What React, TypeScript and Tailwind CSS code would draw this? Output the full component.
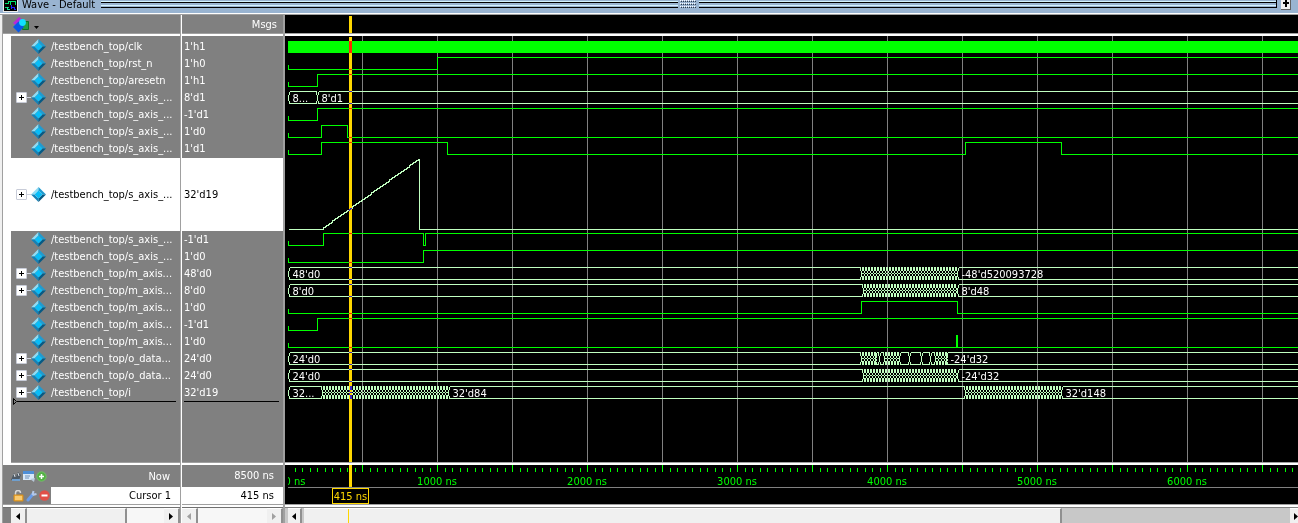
import React from "react";

type Signal = { name: string; value: string; bus?: boolean; tall?: boolean };

const signals: Signal[] = [
  { name: "/testbench_top/clk", value: "1'h1" },
  { name: "/testbench_top/rst_n", value: "1'h0" },
  { name: "/testbench_top/aresetn", value: "1'h1" },
  { name: "/testbench_top/s_axis_...", value: "8'd1", bus: true },
  { name: "/testbench_top/s_axis_...", value: "-1'd1" },
  { name: "/testbench_top/s_axis_...", value: "1'd0" },
  { name: "/testbench_top/s_axis_...", value: "1'd1" },
  { name: "/testbench_top/s_axis_...", value: "32'd19", bus: true, tall: true },
  { name: "/testbench_top/s_axis_...", value: "-1'd1" },
  { name: "/testbench_top/s_axis_...", value: "1'd0" },
  { name: "/testbench_top/m_axis...", value: "48'd0", bus: true },
  { name: "/testbench_top/m_axis...", value: "8'd0", bus: true },
  { name: "/testbench_top/m_axis...", value: "1'd0" },
  { name: "/testbench_top/m_axis...", value: "-1'd1" },
  { name: "/testbench_top/m_axis...", value: "1'd0" },
  { name: "/testbench_top/o_data...", value: "24'd0", bus: true },
  { name: "/testbench_top/o_data...", value: "24'd0", bus: true },
  { name: "/testbench_top/i", value: "32'd19", bus: true },
];

const FAR = 3000;
const BUS = "#c0ffc0";
const GRID = Array.from({ length: 40 }, (_, i) => (i + 1) * 75);

function Diamond() {
  return (
    <svg className="block shrink-0" width="15" height="15" viewBox="0 0 15 15">
      <path d="M7.5 0 0 7.5h3.5l4-4z" fill="#8fdcf5" />
      <path d="M7.5 0 15 7.5h-3.5l-4-4z" fill="#1f9bd0" />
      <path d="M0 7.5 7.5 15v-3.5l-4-4z" fill="#1482b8" />
      <path d="M15 7.5 7.5 15v-3.5l4-4z" fill="#075a84" />
      <path d="M7.5 3.5l4 4-4 4-4-4z" fill="#08bdf8" />
    </svg>
  );
}

function Expander() {
  return (
    <button
      aria-label="Expand signal"
      className="flex h-[11px] w-[11px] shrink-0 items-center justify-center rounded-[1px] border border-[#c8ccd8] bg-white"
    >
      <svg width="5" height="5" viewBox="0 0 5 5" shapeRendering="crispEdges">
        <path d="M2 0h1v5H2zM0 2h5v1H0z" fill="#000" />
      </svg>
    </button>
  );
}

function Digital({ y, points }: { y: number; points: [number, number][] }) {
  const level = (v: number) => (v ? y + 1 : y + 13);
  let d = `M1 ${level(0) - 5}V${level(0)}`;
  points.forEach(([x, v]) => {
    d += `H${x}V${level(v)}`;
  });
  return <path d={d + `H${FAR}`} fill="none" stroke="#00ff00" />;
}

function Bus({ y, from, to, label, open }: { y: number; from: number; to: number; label?: string; open?: boolean }) {
  const t = y + 1;
  const right = open ? `H${to}M${to} ${t + 12}` : `H${to - 1}V${t + 3}M${to} ${t + 3}V${t + 9}M${to - 1} ${t + 9}V${t + 12}`;
  return (
    <>
      <path
        d={`M${from + 1} ${t}${right}H${from + 1}V${t + 9}M${from} ${t + 9}V${t + 3}M${from + 1} ${t + 3}V${t}`}
        fill="none"
        stroke={BUS}
      />
      {label && (
        <text x={from + 4} y={y + 11} fill="#fff">
          {label}
        </text>
      )}
    </>
  );
}

function Hatch({ y, from, to }: { y: number; from: number; to: number }) {
  let d = "";
  for (let x = from; x < to; x += 3) {
    d += `M${x} ${y + 1}h2v4h-2zM${x + 2} ${y + 5}h1v2h-1zM${x} ${y + 7}h2v1h-2zM${x + 2} ${y + 8}h1v2h-1zM${x} ${y + 10}h2v4h-2z`;
  }
  return <path d={d} fill={BUS} />;
}

function Waves() {
  const r = (i: number) => 3 + 17 * i + (i > 7 ? 57 : 0);
  let ramp = "M1 193H36";
  for (let i = 1; i <= 64; i++) {
    ramp += `V${Math.round(192 - (i * 69) / 64)}H${Math.round(36 + i * 1.5)}`;
  }
  return (
    <svg className="absolute inset-0 h-full w-full" shapeRendering="crispEdges" fontSize="11">
      <rect width="100%" height="100%" fill="#000" />
      <svg x="3" y="0" width="100%" height="100%" overflow="hidden">
        <g transform="translate(-1 0)">
          {GRID.map((x) => (
            <rect key={x} x={x} y="0" width="1" height="100%" fill="#808080" />
          ))}
          <rect x="1" y={r(0) + 2} width={FAR} height="12" fill="#00ff00" />
          <g transform="translate(.5 .5)">
            <Digital y={r(1)} points={[[150, 1]]} />
            <Digital y={r(2)} points={[[30, 1]]} />
            <Digital y={r(4)} points={[[30, 1]]} />
            <Digital y={r(5)} points={[[34, 1], [60, 0]]} />
            <Digital y={r(6)} points={[[34, 1], [160, 0], [678, 1], [774, 0]]} />
            <path d={`${ramp}V193H${FAR}`} fill="none" stroke={BUS} />
            <Digital y={r(8)} points={[[36, 1], [136, 0], [138, 1]]} />
            <Digital y={r(9)} points={[[136, 1]]} />
            <Digital y={r(12)} points={[[574, 1], [670, 0]]} />
            <Digital y={r(13)} points={[[30, 1]]} />
            <Digital y={r(14)} points={[[669, 1], [670, 0]]} />
            <Bus y={r(3)} from={1} to={30} label="8..." />
            <Bus y={r(3)} from={30} to={FAR} label="8'd1" open />
            <Bus y={r(10)} from={1} to={574} label="48'd0" />
            <Bus y={r(10)} from={670} to={FAR} label="-48'd520093728" open />
            <Bus y={r(11)} from={1} to={576} label="8'd0" />
            <Bus y={r(11)} from={670} to={FAR} label="8'd48" open />
            <Bus y={r(15)} from={1} to={574} label="24'd0" />
            <Bus y={r(15)} from={588} to={592} />
            <Bus y={r(15)} from={592} to={597} />
            <Bus y={r(15)} from={612} to={622} />
            <Bus y={r(15)} from={622} to={634} />
            <Bus y={r(15)} from={634} to={643} />
            <Bus y={r(15)} from={643} to={648} />
            <Bus y={r(15)} from={659} to={FAR} label="-24'd32" open />
            <Bus y={r(16)} from={1} to={576} label="24'd0" />
            <Bus y={r(16)} from={670} to={FAR} label="-24'd32" open />
            <Bus y={r(17)} from={1} to={35} label="32..." />
            <Bus y={r(17)} from={161} to={678} label="32'd84" />
            <Bus y={r(17)} from={774} to={FAR} label="32'd148" open />
          </g>
          <Hatch y={r(10)} from={575} to={670} />
          <Hatch y={r(11)} from={577} to={670} />
          <Hatch y={r(15)} from={575} to={588} />
          <Hatch y={r(15)} from={598} to={612} />
          <Hatch y={r(15)} from={649} to={659} />
          <Hatch y={r(16)} from={577} to={670} />
          <Hatch y={r(17)} from={36} to={161} />
          <Hatch y={r(17)} from={679} to={774} />
          <rect x="62" y="1" width="3" height="100%" fill="#ffd700" className="mix-blend-difference" />
        </g>
      </svg>
    </svg>
  );
}

function Timeline() {
  const ticks = Array.from({ length: 400 }, (_, i) => i + 1);
  return (
    <svg className="block h-[39px] w-full" shapeRendering="crispEdges" fontSize="11">
      <rect width="100%" height="100%" fill="#000" />
      <svg x="3" y="0" width="100%" height="39" overflow="hidden">
        <g transform="translate(-1 0)">
          {ticks.map((i) => (
            <rect key={i} x={Math.round(i * 7.5 + 0.2)} y={i % 10 ? 3 : 0} width="1" height={i % 10 ? 4 : 7} fill="#00ff00" />
          ))}
          {[0, 1, 2, 3, 4, 5, 6].map((i) => (
            <text key={i} x={i ? i * 150 : 8} y="20" textAnchor="middle" fill="#00ff00">
              {i * 1000} ns
            </text>
          ))}
          <rect x="0" y="22" width={FAR} height="1" fill="#808080" />
          <rect x="62" y="0" width="3" height="22" fill="#ffd700" />
          <rect x="45.5" y="23.5" width="36" height="15" fill="#000" stroke="#ffd700" />
          <text x="63.5" y="35" textAnchor="middle" fill="#ffd700">
            415 ns
          </text>
        </g>
      </svg>
    </svg>
  );
}

function ArrowButton({ dir, off, wide }: { dir: "left" | "right"; off?: boolean; wide?: boolean }) {
  return (
    <button
      aria-label={dir === "left" ? "Scroll left" : "Scroll right"}
      disabled={off}
      className={`flex h-full shrink-0 items-center justify-center border-t border-r-2 border-t-white border-r-[#909090] bg-[#f0f0f0] ${wide ? "w-[14px]" : "w-4"}`}
    >
      <svg width="4" height="7" viewBox="0 0 4 7">
        <path d={dir === "left" ? "M4 0v7L0 3.5z" : "M0 0v7l4-3.5z"} fill={off ? "#a0a0a0" : "#000"} />
      </svg>
    </button>
  );
}

function Rails({ end }: { end?: boolean }) {
  return (
    <div className={`flex h-2 flex-1 flex-col ${end ? "border-r border-black" : ""}`}>
      <div className="h-px bg-[#99b4d1]" />
      <div className="h-px bg-[#d4f4ff]" />
      <div className="h-px bg-black" />
      <div className="h-[2px] bg-[#99b4d1]" />
      <div className="h-px bg-[#d4f4ff]" />
      <div className="h-px bg-[#99b4d1]" />
      <div className="h-px bg-black" />
    </div>
  );
}

const trough = "bg-[#f7f7f7]";
const ridge = "border-b-2 border-white shadow-[inset_0_-1px_#a0a0a0]";

export default function App() {
  return (
    <div className="flex min-h-screen flex-col overflow-hidden bg-[#f0f0f0] font-['DejaVu_Sans_Condensed','Noto_Sans',sans-serif] text-[11px] leading-[17px] text-white">
      <header className="flex h-[15px] items-start overflow-hidden border-b border-[#a0a0a0] bg-[#99b4d1] text-black shadow-[inset_0_-1px_#ffffff]">
        <svg className="ml-[3px] block shrink-0" width="15" height="12" viewBox="0 0 15 12" shapeRendering="crispEdges">
          <path d="M0 0h15v12H0z" fill="#000" />
          <path d="M0 0h1v12H0zM14 0h1v12h-1zM0 11h15v1H0z" fill="#e8e8e8" />
          <path d="M2 3.5h3V1.5h2v3M2 7.5h4M8 1.5h4v3h1" fill="none" stroke="#00e070" />
          <path d="M8 5v4M8 7.5h3v1.500h2" fill="none" stroke="#2020ff" />
          <path d="M4 7v2h3" fill="none" stroke="#20e0a0" />
        </svg>
        <h1 className="-mt-[3px] ml-[4px] shrink-0 text-[11px] leading-[15px] whitespace-nowrap">Wave - Default</h1>
        <div className="mr-1 ml-[6px] flex h-[9px] flex-1 items-start">
          <Rails />
          <svg className="mx-[2px] block shrink-0" width="17" height="8" viewBox="0 0 17 8" shapeRendering="crispEdges">
            {[0, 1, 2, 3, 4, 5, 6, 7].map((i) => (
              <g key={i}>
                <path d={`M${i * 2} 0h1v1h-1zM${i * 2} 3h1v1h-1zM${i * 2} 6h1v1h-1z`} fill="#fff" />
                <path d={`M${i * 2 + 1} 1h1v1h-1zM${i * 2 + 1} 4h1v1h-1zM${i * 2 + 1} 7h1v1h-1z`} fill="#303a48" />
              </g>
            ))}
          </svg>
          <Rails end />
        </div>
        <button aria-label="Dock or undock" className="mr-[7px] flex h-[10px] w-[10px] shrink-0 items-start justify-center border-r border-b border-[#606060] bg-[#f0f0f0]">
          <svg width="7" height="7" viewBox="0 0 7 7" shapeRendering="crispEdges">
            <path d="M3 0h2v7H3zM1 2h6v2H1z" fill="#000" />
          </svg>
        </button>
      </header>

      <main className="flex min-w-0 flex-1 pl-[2px]">
        <section aria-label="Signals" className="flex w-[179px] shrink-0 flex-col border-r border-l border-[#a0a0a0] bg-[#808080]">
          <div className={`flex h-[21px] items-center pl-[10px] ${ridge}`}>
            <button aria-label="Signal options" className="flex items-end gap-1">
              <svg width="17" height="16" viewBox="0 0 17 16">
                <path d="M0 6 6 0l4 3-6 6z" fill="#b828d8" />
                <path d="M9.5 4.5h6v8h-6z" fill="#22a040" stroke="#127028" />
                <path d="M5.5 4.500l5.500 5.500-5.500 5.500L0 10z" fill="#0858e8" />
                <circle cx="9.5" cy="5.500" r="3.400" fill="#10e0ff" />
              </svg>
              <svg className="mb-1" width="5" height="3" viewBox="0 0 5 3">
                <path d="M0 0h5L2.500 3z" fill="#000" />
              </svg>
            </button>
          </div>
          <div className={`flex flex-1 border-l-8 border-l-white ${ridge}`}>
            <ul className="w-full pt-[3px]">
              {signals.map((s, i) => (
                <li
                  key={i}
                  className={`flex items-center ${s.tall ? "mb-px h-[73px] bg-white text-black" : "h-[17px] pb-[2px]"}`}
                >
                  <span className="flex w-5 items-center justify-end">
                    {s.bus && (
                      <>
                        <Expander />
                        <span className="h-px w-[4px] bg-[#d0d4e0]" />
                      </>
                    )}
                  </span>
                  <Diamond />
                  <span className="-mt-px ml-[5px] whitespace-nowrap">{s.name}</span>
                </li>
              ))}
              <li aria-hidden="true" className="-mt-1 flex items-center pr-1 pl-[2px]">
                <svg width="4" height="7" viewBox="0 0 4 7">
                  <path d="M.5.5v6l3-3z" fill="none" stroke="#000" />
                </svg>
                <span className="h-px flex-1 bg-black" />
              </li>
            </ul>
          </div>
          <div className={`h-[42px] ${ridge}`}>
            <div className="flex h-[22px] items-center justify-between pr-[10px] pl-[8px]">
              <span className="flex items-center gap-px">
                <svg width="11" height="11" viewBox="0 0 11 11">
                  <path d="M0 9 3 2l2 4 2-5 3 3-2 5z" fill="#4e5a66" />
                  <path d="M1 8h8v2H1z" fill="#6f9fce" />
                  <path d="M3 3l1 3M7 2l1 3" stroke="#d8dde2" />
                </svg>
                <svg width="12" height="11" viewBox="0 0 12 11">
                  <path d="M0 1h11v8H0z" fill="#d9e8f8" />
                  <path d="M0 0h11v3H0z" fill="#4f8fd8" />
                  <path d="M2 5h5M2 7h4" stroke="#7090b8" />
                  <path d="M7 8l4 3 1-4z" fill="#b8c8d8" />
                </svg>
                <svg width="11" height="11" viewBox="0 0 11 11">
                  <circle cx="5.5" cy="5.5" r="5" fill="#52b043" />
                  <circle cx="5.5" cy="5.5" r="4.7" fill="none" stroke="#8cc884" strokeWidth=".6" />
                  <path d="M5.5 3v5M3 5.5h5" stroke="#fff" strokeWidth="1.5" />
                </svg>
              </span>
              <span>Now</span>
            </div>
            <div className="flex h-[17px]">
              <span className="flex w-[48px] shrink-0 items-center gap-[2px] pl-[10px]">
                <svg className="shrink-0" width="11" height="12" viewBox="0 0 11 12">
                  <path d="M2.5 6V3a2.5 2.5 0 015 0" fill="none" stroke="#d8d8d8" strokeWidth="1.5" />
                  <path d="M1 5h9v6H1z" fill="#f4b440" stroke="#d08a1c" />
                  <path d="M2 7h7M2 9h7" stroke="#ffe0a0" />
                </svg>
                <svg className="shrink-0" width="11" height="12" viewBox="0 0 11 12">
                  <path d="M2 10l5-6" stroke="#6a9ce8" strokeWidth="3" strokeLinecap="round" />
                  <path d="M6.500 5l1-4M6.500 5l4-1" stroke="#b4c8e8" strokeWidth="2" />
                </svg>
                <svg className="shrink-0" width="11" height="11" viewBox="0 0 11 11">
                  <circle cx="5.5" cy="5.5" r="5.200" fill="#e05048" />
                  <path d="M2.500 5.5h6" stroke="#fff" strokeWidth="2" />
                </svg>
              </span>
              <span className="flex-1 bg-white pr-[9px] text-right text-black">Cursor 1</span>
            </div>
          </div>
          <div className="flex h-4 border-t border-[#707070] pl-2">
            <ArrowButton dir="left" />
            <div className={`flex flex-1 ${trough}`}>
              <div className="h-full w-[100px] border-t border-r-2 border-t-white border-r-[#909090] bg-[#f0f0f0]" />
            </div>
            <ArrowButton dir="right" />
          </div>
        </section>

        <section aria-label="Values" className="flex w-[104px] shrink-0 flex-col border-r-2 border-l border-r-[#a0a0a0] border-l-white bg-[#808080]">
          <div className={`h-[21px] pr-[6px] text-right leading-[19px] ${ridge}`}>Msgs</div>
          <div className={`flex-1 ${ridge}`}>
            <ul className="pt-[3px]">
              {signals.map((s, i) => (
                <li
                  key={i}
                  className={`flex items-center pl-[2px] ${s.tall ? "mb-px h-[73px] bg-white text-black" : "h-[17px] pb-[2px]"}`}
                >
                  <span className="-mt-px">{s.value}</span>
                </li>
              ))}
              <li aria-hidden="true" className="-mt-px mr-1 ml-[2px] h-px bg-black" />
            </ul>
          </div>
          <div className={`h-[42px] text-right ${ridge}`}>
            <div className="h-[22px] pr-[9px] leading-[22px]">8500 ns</div>
            <div className="h-[17px] bg-white pr-[9px] text-black">415 ns</div>
          </div>
          <div className="flex h-4 border-t border-[#707070]">
            <ArrowButton dir="left" off />
            <div className={`flex-1 ${trough}`} />
            <ArrowButton dir="right" off />
          </div>
        </section>

        <section aria-label="Waveforms" className="flex min-w-0 flex-1 flex-col">
          <div className={`h-[21px] bg-black pl-16 ${ridge}`}>
            <div className="mt-px h-[17px] w-[3px] bg-[#ffd700]" />
          </div>
          <div className={`relative flex-1 bg-[#a0a0a0] ${ridge}`}>
            <div className="relative h-[calc(100%-1px)] overflow-hidden">
              <Waves />
            </div>
          </div>
          <div className={`h-[42px] bg-[#a0a0a0] ${ridge}`}>
            <Timeline />
          </div>
          <div className="-mr-[6px] flex h-4 border-t border-[#808080] bg-[#c8c8c8] pl-[3px]">
            <ArrowButton dir="left" wide />
            <div className="flex flex-1 pl-[2px]">
              <div className="h-full w-10/13 border-t border-r-2 border-t-white border-r-[#909090] bg-[#f0f0f0] pl-11">
                <div className="h-full w-px bg-[#ffd700]" />
              </div>
            </div>
            <ArrowButton dir="right" wide />
          </div>
        </section>
      </main>
    </div>
  );
}
